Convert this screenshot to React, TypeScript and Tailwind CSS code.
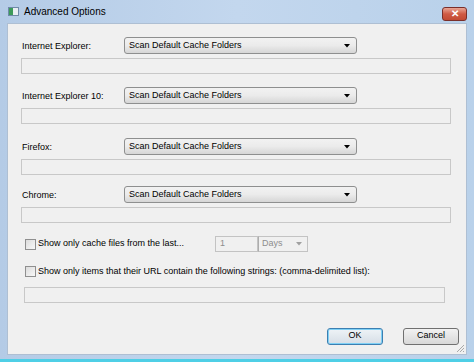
import React from "react";

const Arrow = ({ color = "#000" }: { color?: string }) => (
  <svg width="6" height="4" viewBox="0 0 6 4">
    <polygon points="0,0 6,0 3,3.5" fill={color} />
  </svg>
);

const Combo = ({ label }: { label: string }) => (
  <div className="flex items-center h-[17px] w-[233px] rounded-[3px] border border-[#8e8f8f] bg-gradient-to-b from-[#f2f2f2] via-[#ebebeb] to-[#d6d6d6] pl-[4px] pr-[6px]">
    <span className="flex-1 text-[9px] text-black leading-none">{label}</span>
    <Arrow />
  </div>
);

const Box = ({ w = "w-[430px]" }: { w?: string }) => (
  <div className={`h-[16px] ${w} border border-[#c8c8c8] bg-[#f0f0f0]`} />
);

const Row = ({ label, top }: { label: string; top: string }) => (
  <div className={`flex flex-col ${top}`}>
    <div className="flex items-center">
      <span className="w-[102px] ml-[1px] text-[9px] text-black pt-[2px]">{label}</span>
      <Combo label="Scan Default Cache Folders" />
    </div>
    <div className="mt-[4px]">
      <Box />
    </div>
  </div>
);

const Check = () => (
  <div className="w-[11px] h-[11px] border border-[#8f8f8f] bg-gradient-to-br from-[#dcdcdc] to-[#f8f8f8] shrink-0" />
);

export default function App() {
  return (
    <div
      className="w-[474px] h-[362px] flex flex-col bg-gradient-to-r from-[#b4cbe6] via-[#c3d7ee] to-[#b9d1ea] overflow-hidden"
      style={{ fontFamily: '"Liberation Sans", Arial, sans-serif' }}
    >
      {/* title bar */}
      <div className="h-[23px] flex items-center shrink-0 relative">
        <div className="ml-[8px] w-[11px] h-[9px] border border-[#6f8aa8] bg-[#e9eef3] flex">
          <div className="w-[4px] h-full bg-[#3d9a5a]" />
        </div>
        <span className="ml-[5px] text-[10px] text-black">Advanced Options</span>
        <div className="absolute left-[442px] top-[7px] w-[25px] h-[14px] rounded-[3px] border border-[#7a2f2a] bg-gradient-to-b from-[#e8a595] via-[#cf5a44] to-[#c24a33] flex items-center justify-center">
          <span className="text-white text-[10px] font-bold leading-none">✕</span>
        </div>
      </div>
      {/* client */}
      <div className="ml-[7px] w-[460px] h-[332px] bg-[#f0f0f0] border border-[#aebfd3] relative flex flex-col px-[13px]">
        <Row label="Internet Explorer:" top="mt-[13px]" />
        <Row label="Internet Explorer 10:" top="mt-[13px]" />
        <Row label="Firefox:" top="mt-[14px]" />
        <Row label="Chrome:" top="mt-[11px]" />

        <div className="flex items-center mt-[13px] ml-[4px] h-[16px]">
          <Check />
          <span className="ml-[2px] text-[9px] text-black w-[177px]">Show only cache files from the last...</span>
          <div className="h-[16px] w-[43px] border border-[#c3c3c3] bg-[#f0f0f0] text-[9px] text-[#8d8d8d] pl-[4px] flex items-center">1</div>
          <div className="h-[16px] w-[50px] border border-[#c3c3c3] border-l-[#adadad] bg-[#f0f0f0] text-[9px] text-[#8d8d8d] pl-[3px] pr-[5px] flex items-center">
            <span className="flex-1">Days</span>
            <Arrow color="#a0a0a0" />
          </div>
        </div>

        <div className="flex items-center mt-[13px] ml-[4px]">
          <Check />
          <span className="ml-[2px] text-[9px] text-black">Show only items that their URL contain the following strings: (comma-delimited list):</span>
        </div>
        <div className="mt-[8px] ml-[3px]">
          <Box w="w-[421px]" />
        </div>

        <div className="flex justify-end mt-[25px] gap-[20px] mr-[-6px]">
          <div className="w-[56px] h-[17px] rounded-[3px] border border-[#3c7fb1] shadow-[inset_0_0_0_1px_#7fd0f5] bg-gradient-to-b from-[#eef3f7] to-[#d6dee6] flex items-center justify-center text-[9px] text-black">OK</div>
          <div className="w-[56px] h-[17px] rounded-[3px] border border-[#707070] bg-gradient-to-b from-[#f2f2f2] to-[#d8d8d8] flex items-center justify-center text-[9px] text-black">Cancel</div>
        </div>

        <svg className="absolute right-[1px] bottom-[1px]" width="10" height="10" viewBox="0 0 10 10">
          <g stroke="#a9a9a9" strokeWidth="1">
            <line x1="9" y1="2" x2="2" y2="9" />
            <line x1="9" y1="5" x2="5" y2="9" />
            <line x1="9" y1="8" x2="8" y2="9" />
          </g>
        </svg>
      </div>
      <div className="flex-1" />
      <div className="h-[3px] bg-[#4fcfe6] shrink-0" />
    </div>
  );
}
